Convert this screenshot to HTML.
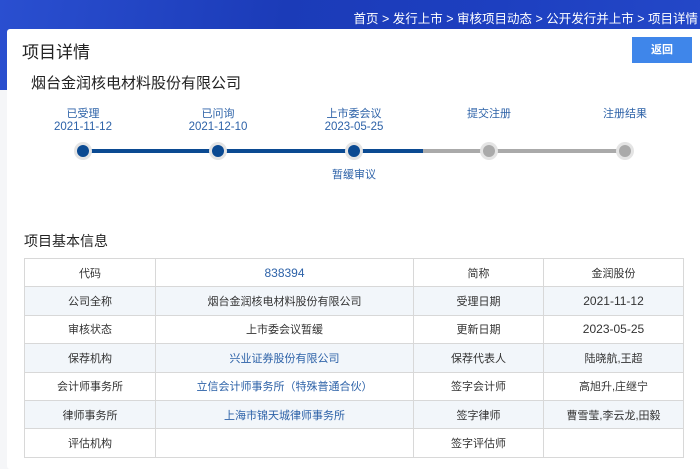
<!DOCTYPE html>
<html><head><meta charset="utf-8"><style>
*{margin:0;padding:0;box-sizing:border-box}
body{width:700px;height:465px;overflow:hidden;background:#f5f6f8;font-family:"Liberation Sans","Noto Sans CJK SC",sans-serif;position:relative}
.band{position:absolute;left:0;top:0;width:700px;height:90px;background:linear-gradient(100deg,#2a4fd0,#1b3bb8 40%,#1d3fc0 70%,#2448c8)}
.bc{position:absolute;right:2px;top:8px;color:#fff;font-size:12.5px}
.card{position:absolute;left:7px;top:29px;width:700px;height:440px;background:#fff;border-radius:3px}
.t{position:absolute;left:22px;top:38px;font-size:17px;color:#222}
.btn{position:absolute;left:632px;top:37px;width:60px;height:26px;background:#3f86ea;color:#fff;font-size:11px;font-weight:bold;text-align:center;line-height:26px}
.co{position:absolute;left:31px;top:72px;font-size:15px;color:#222}
.st{position:absolute;width:90px;text-align:center;font-size:11px;color:#2d62a8}
.dt{position:absolute;width:90px;text-align:center;font-size:11.5px;color:#2d62a8}
.dot{position:absolute;width:18px;height:18px;border-radius:50%;background:#e4e4e4;top:142px}
.dot i{position:absolute;left:3px;top:3px;width:12px;height:12px;border-radius:50%;background:#0b4a92}
.dot.g i{background:#aaa}
.h2{position:absolute;left:24px;top:231px;font-size:14px;color:#222}
table{position:absolute;left:24px;top:258px;border-collapse:collapse;font-size:11px;color:#333}
td{border:1px solid #d8d8d8;height:28.4px;text-align:center;padding:0}
td.n{font-size:12px}
tr:nth-child(even) td{background:#f2f6fa}
.b{color:#2d62a8}
</style></head><body>
<div class="band"></div>
<div class="bc">首页 &gt; 发行上市 &gt; 审核项目动态 &gt; 公开发行并上市 &gt; 项目详情</div>
<div class="card"></div>
<div class="t">项目详情</div>
<div class="btn">返回</div>
<div class="co">烟台金润核电材料股份有限公司</div>
<div class="st" style="left:38px;top:105px">已受理</div><div class="dt" style="left:38px;top:121px">2021-11-12</div>
<div class="st" style="left:173px;top:105px">已问询</div><div class="dt" style="left:173px;top:121px">2021-12-10</div>
<div class="st" style="left:309px;top:105px">上市委会议</div><div class="dt" style="left:309px;top:121px">2023-05-25</div>
<div class="st" style="left:444px;top:105px">提交注册</div>
<div class="st" style="left:580px;top:105px">注册结果</div>
<div style="position:absolute;left:83px;top:149px;width:340px;height:4px;background:#0b4a92"></div>
<div style="position:absolute;left:423px;top:149px;width:202px;height:4px;background:#aaa"></div>
<div class="dot" style="left:74px"><i></i></div>
<div class="dot" style="left:209px"><i></i></div>
<div class="dot" style="left:345px"><i></i></div>
<div class="dot g" style="left:480px"><i></i></div>
<div class="dot g" style="left:616px"><i></i></div>
<div class="st" style="left:309px;top:166px">暂缓审议</div>
<div class="h2">项目基本信息</div>
<table>
<colgroup><col style="width:131px"><col style="width:258px"><col style="width:130px"><col style="width:140px"></colgroup>
<tr><td>代码</td><td class="b n">838394</td><td>简称</td><td>金润股份</td></tr>
<tr><td>公司全称</td><td>烟台金润核电材料股份有限公司</td><td>受理日期</td><td class="n">2021-11-12</td></tr>
<tr><td>审核状态</td><td>上市委会议暂缓</td><td>更新日期</td><td class="n">2023-05-25</td></tr>
<tr><td>保荐机构</td><td class="b">兴业证券股份有限公司</td><td>保荐代表人</td><td>陆晓航,王超</td></tr>
<tr><td>会计师事务所</td><td class="b">立信会计师事务所（特殊普通合伙）</td><td>签字会计师</td><td>高旭升,庄继宁</td></tr>
<tr><td>律师事务所</td><td class="b">上海市锦天城律师事务所</td><td>签字律师</td><td>曹雪莹,李云龙,田毅</td></tr>
<tr><td>评估机构</td><td></td><td>签字评估师</td><td></td></tr>
</table>
</body></html>
